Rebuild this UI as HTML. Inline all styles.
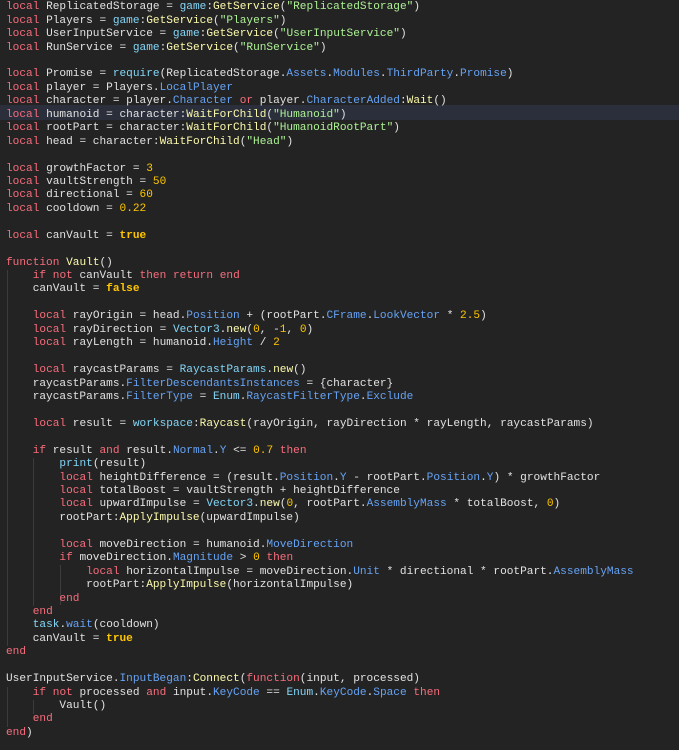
<!DOCTYPE html>
<html><head><meta charset="utf-8"><style>
html,body{margin:0;padding:0;background:#232323;width:679px;height:750px;overflow:hidden}
pre{margin:0;position:absolute;left:6px;top:1.3px;font-family:"Liberation Mono",monospace;font-size:11.13px;line-height:13.44px;color:#e2e2e2;white-space:pre}
.k{color:#f86d7c}.b{color:#84d6f7}.p{color:#66a3f5}.m{color:#fdfbac}.s{color:#adf195}.n{color:#ffc600}.t{color:#ffc600;font-weight:bold}
.hl{position:absolute;left:0;width:679px;top:105px;height:14.5px;background:#2b2e3b}
.g{position:absolute;width:1px;background:#3c3c3c}
</style></head><body>
<div class="hl"></div>
<div class="g" style="left:7px;top:270px;height:376px"></div>
<div class="g" style="left:33px;top:458px;height:148px"></div>
<div class="g" style="left:60px;top:565px;height:40px"></div>
<div class="g" style="left:7px;top:687px;height:40px"></div>
<div class="g" style="left:33px;top:700px;height:14px"></div>
<pre><span class="k">local</span> ReplicatedStorage = <span class="b">game</span>:<span class="m">GetService</span>(<span class="s">"ReplicatedStorage"</span>)
<span class="k">local</span> Players = <span class="b">game</span>:<span class="m">GetService</span>(<span class="s">"Players"</span>)
<span class="k">local</span> UserInputService = <span class="b">game</span>:<span class="m">GetService</span>(<span class="s">"UserInputService"</span>)
<span class="k">local</span> RunService = <span class="b">game</span>:<span class="m">GetService</span>(<span class="s">"RunService"</span>)

<span class="k">local</span> Promise = <span class="b">require</span>(ReplicatedStorage.<span class="p">Assets</span>.<span class="p">Modules</span>.<span class="p">ThirdParty</span>.<span class="p">Promise</span>)
<span class="k">local</span> player = Players.<span class="p">LocalPlayer</span>
<span class="k">local</span> character = player.<span class="p">Character</span> <span class="k">or</span> player.<span class="p">CharacterAdded</span>:<span class="m">Wait</span>()
<span class="k">local</span> humanoid = character:<span class="m">WaitForChild</span>(<span class="s">"Humanoid"</span>)
<span class="k">local</span> rootPart = character:<span class="m">WaitForChild</span>(<span class="s">"HumanoidRootPart"</span>)
<span class="k">local</span> head = character:<span class="m">WaitForChild</span>(<span class="s">"Head"</span>)

<span class="k">local</span> growthFactor = <span class="n">3</span>
<span class="k">local</span> vaultStrength = <span class="n">50</span>
<span class="k">local</span> directional = <span class="n">60</span>
<span class="k">local</span> cooldown = <span class="n">0.22</span>

<span class="k">local</span> canVault = <span class="t">true</span>

<span class="k">function</span> <span class="m">Vault</span>()
    <span class="k">if</span> <span class="k">not</span> canVault <span class="k">then</span> <span class="k">return</span> <span class="k">end</span>
    canVault = <span class="t">false</span>

    <span class="k">local</span> rayOrigin = head.<span class="p">Position</span> + (rootPart.<span class="p">CFrame</span>.<span class="p">LookVector</span> * <span class="n">2.5</span>)
    <span class="k">local</span> rayDirection = <span class="b">Vector3</span>.<span class="m">new</span>(<span class="n">0</span>, -<span class="n">1</span>, <span class="n">0</span>)
    <span class="k">local</span> rayLength = humanoid.<span class="p">Height</span> / <span class="n">2</span>

    <span class="k">local</span> raycastParams = <span class="b">RaycastParams</span>.<span class="m">new</span>()
    raycastParams.<span class="p">FilterDescendantsInstances</span> = {character}
    raycastParams.<span class="p">FilterType</span> = <span class="b">Enum</span>.<span class="p">RaycastFilterType</span>.<span class="p">Exclude</span>

    <span class="k">local</span> result = <span class="b">workspace</span>:<span class="m">Raycast</span>(rayOrigin, rayDirection * rayLength, raycastParams)

    <span class="k">if</span> result <span class="k">and</span> result.<span class="p">Normal</span>.<span class="p">Y</span> &lt;= <span class="n">0.7</span> <span class="k">then</span>
        <span class="b">print</span>(result)
        <span class="k">local</span> heightDifference = (result.<span class="p">Position</span>.<span class="p">Y</span> - rootPart.<span class="p">Position</span>.<span class="p">Y</span>) * growthFactor
        <span class="k">local</span> totalBoost = vaultStrength + heightDifference
        <span class="k">local</span> upwardImpulse = <span class="b">Vector3</span>.<span class="m">new</span>(<span class="n">0</span>, rootPart.<span class="p">AssemblyMass</span> * totalBoost, <span class="n">0</span>)
        rootPart:<span class="m">ApplyImpulse</span>(upwardImpulse)

        <span class="k">local</span> moveDirection = humanoid.<span class="p">MoveDirection</span>
        <span class="k">if</span> moveDirection.<span class="p">Magnitude</span> &gt; <span class="n">0</span> <span class="k">then</span>
            <span class="k">local</span> horizontalImpulse = moveDirection.<span class="p">Unit</span> * directional * rootPart.<span class="p">AssemblyMass</span>
            rootPart:<span class="m">ApplyImpulse</span>(horizontalImpulse)
        <span class="k">end</span>
    <span class="k">end</span>
    <span class="b">task</span>.<span class="p">wait</span>(cooldown)
    canVault = <span class="t">true</span>
<span class="k">end</span>

UserInputService.<span class="p">InputBegan</span>:<span class="m">Connect</span>(<span class="k">function</span>(input, processed)
    <span class="k">if</span> <span class="k">not</span> processed <span class="k">and</span> input.<span class="p">KeyCode</span> == <span class="b">Enum</span>.<span class="p">KeyCode</span>.<span class="p">Space</span> <span class="k">then</span>
        Vault()
    <span class="k">end</span>
<span class="k">end</span>)</pre>
</body></html>
